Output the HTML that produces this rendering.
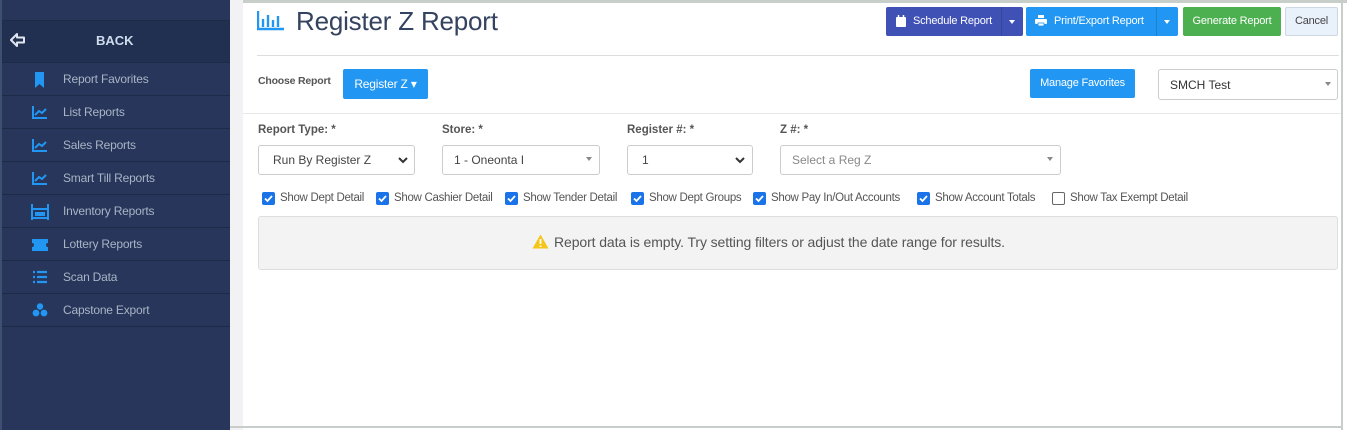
<!DOCTYPE html>
<html><head><style>
*{box-sizing:border-box;margin:0;padding:0}
body{width:1347px;height:430px;position:relative;overflow:hidden;background:#fff;font-family:"Liberation Sans",Arial,sans-serif;}
.a{position:absolute}
#sb{left:0;top:0;width:230px;height:430px;background:#27365a;border-left:2px solid #3d5070}
.row{position:absolute;left:0;width:228px;height:33px;border-bottom:1px solid #1e2b47;color:#a9b4c6;font-size:12px;letter-spacing:-0.2px;line-height:33px;padding-left:61px}
.row svg{position:absolute;left:30px;top:9px}
.btn{position:absolute;color:#fff;font-size:11px;letter-spacing:-0.2px;border-radius:2px;text-align:center;white-space:nowrap}
.lbl{position:absolute;font-size:12px;color:#444;white-space:nowrap}
.sel{position:absolute;height:30px;border:1px solid #ccc;border-radius:3px;font-size:12px;color:#444;line-height:28px;padding-left:14px}
.cb{position:absolute;top:192px;width:13px;height:13px;background:#1a73e8;border-radius:2px}
.cb svg{position:absolute;left:1px;top:1px}
.ct{position:absolute;top:192px;font-size:11.5px;letter-spacing:-0.3px;color:#555;white-space:nowrap}
.caret{position:absolute;width:0;height:0;border-left:3px solid transparent;border-right:3px solid transparent;border-top:4px solid #888}
</style></head><body>
<div id="sb" class="a">
  <div class="a" style="left:0;top:20px;width:228px;height:43px;background:#213050;border-top:1px solid #1e2b47;border-bottom:1px solid #1e2b47"></div>
  <svg class="a" style="left:8px;top:33px" width="16" height="14" viewBox="0 0 16 14"><path d="M7 1 L1 7 L7 13 L7 9.5 L14 9.5 L14 4.5 L7 4.5 Z" fill="none" stroke="#dfe6ee" stroke-width="2" stroke-linejoin="round"/></svg>
  <div class="a" style="left:94px;top:33px;color:#cfdcee;font-weight:bold;font-size:13px">BACK</div>
  <div class="row" style="top:63px"><svg width="14" height="16"><path d="M3 0h9v16l-4.5-4-4.5 4z" fill="#2196f3"/></svg>Report Favorites</div>
  <div class="row" style="top:96px"><svg width="16" height="14"><path d="M1 1v12h14" stroke="#2196f3" stroke-width="2" fill="none"/><path d="M3 10l4-4 3 2 4-4" stroke="#2196f3" stroke-width="2" fill="none"/></svg>List Reports</div>
  <div class="row" style="top:129px"><svg width="16" height="14"><path d="M1 1v12h14" stroke="#2196f3" stroke-width="2" fill="none"/><path d="M3 10l4-4 3 2 4-4" stroke="#2196f3" stroke-width="2" fill="none"/></svg>Sales Reports</div>
  <div class="row" style="top:162px"><svg width="16" height="14"><path d="M1 1v12h14" stroke="#2196f3" stroke-width="2" fill="none"/><path d="M3 10l4-4 3 2 4-4" stroke="#2196f3" stroke-width="2" fill="none"/></svg>Smart Till Reports</div>
  <div class="row" style="top:195px"><svg width="18" height="16" style="left:29px"><path d="M1 0v16M17 0v16M1 14h16M1 5h16" stroke="#2196f3" stroke-width="2" fill="none"/><rect x="4" y="8" width="10" height="4" fill="#2196f3"/></svg>Inventory Reports</div>
  <div class="row" style="top:228px"><svg width="18" height="14" style="left:29px;top:10px"><path d="M1 1h16v4a2 2 0 0 0 0 4v4H1V9a2 2 0 0 0 0-4z" fill="#2196f3"/></svg>Lottery Reports</div>
  <div class="row" style="top:261px"><svg width="16" height="14"><path d="M1 2h2M1 7h2M1 12h2M5 2h10M5 7h10M5 12h10" stroke="#2196f3" stroke-width="2.2"/></svg>Scan Data</div>
  <div class="row" style="top:294px"><svg width="16" height="14"><circle cx="8" cy="3.5" r="3.2" fill="#2196f3"/><circle cx="4" cy="10" r="3.4" fill="#2196f3"/><circle cx="12" cy="10" r="3.4" fill="#2196f3"/></svg>Capstone Export</div>
</div>
<div class="a" style="left:230px;top:0;width:13px;height:430px;background:#f2f2f5"></div>
<div class="a" style="left:243px;top:0;width:1104px;height:3px;background:#c8cfca"></div>
<div class="a" style="left:1341px;top:0;width:2px;height:430px;background:#c8cfca"></div>
<div class="a" style="left:230px;top:426px;width:1113px;height:2px;background:#c8cfca"></div>

<svg class="a" style="left:257px;top:11px" width="28" height="20"><path d="M1 0v18h26" stroke="#2196f3" stroke-width="2.4" fill="none"/><path d="M6 8v8M11 4v12M16 9v7M21 5v11" stroke="#2196f3" stroke-width="2.4"/></svg>
<div class="a" style="left:296px;top:6px;font-size:26px;color:#34435f;letter-spacing:-0.2px">Register Z Report</div>

<div class="btn" style="left:886px;top:7px;width:137px;height:29px;background:#3f51b5;line-height:29px;text-align:left;padding-left:27px">Schedule Report</div>
<svg class="a" style="left:896px;top:15px" width="10" height="12"><rect x="0" y="2" width="10" height="10" rx="1" fill="#fff"/><path d="M2.5 0v3M7.5 0v3" stroke="#fff" stroke-width="1.5"/></svg>
<div class="a" style="left:1001px;top:7px;width:1px;height:29px;background:#3546a0"></div>
<div class="caret" style="left:1009px;top:20px;border-top-color:#fff"></div>
<div class="btn" style="left:1026px;top:7px;width:152px;height:29px;background:#2196f3;line-height:29px;text-align:left;padding-left:28px">Print/Export Report</div>
<svg class="a" style="left:1035px;top:15px" width="12" height="12"><rect x="3" y="0" width="6" height="3" fill="#fff"/><rect x="0" y="4" width="12" height="5" rx="1" fill="#fff"/><rect x="3" y="8" width="6" height="3" fill="#fff" stroke="#2196f3" stroke-width="0.8"/></svg>
<div class="a" style="left:1156px;top:7px;width:1px;height:29px;background:#1a80d0"></div>
<div class="caret" style="left:1164px;top:20px;border-top-color:#fff"></div>
<div class="btn" style="left:1183px;top:7px;width:98px;height:29px;background:#4caf50;line-height:29px">Generate Report</div>
<div class="btn" style="left:1285px;top:7px;width:53px;height:29px;background:#e9f1fb;border:1px solid #cdd8e4;color:#444;line-height:27px">Cancel</div>

<div class="a" style="left:257px;top:55px;width:1082px;height:1px;background:#ddd"></div>
<div class="lbl" style="left:258px;top:75px;font-size:10.5px;font-weight:bold;color:#555;letter-spacing:-0.2px">Choose Report</div>
<div class="btn" style="left:343px;top:69px;width:85px;height:30px;background:#2196f3;line-height:30px;font-size:12px">Register Z ▾</div>
<div class="btn" style="left:1030px;top:69px;width:105px;height:29px;background:#2196f3;line-height:29px">Manage Favorites</div>
<div class="sel" style="left:1158px;top:69px;width:180px;height:31px;line-height:30px;padding-left:11px;color:#333">SMCH Test</div>
<div class="caret" style="left:1325px;top:82px"></div>
<div class="a" style="left:243px;top:113px;width:1098px;height:1px;background:#e8e8e8"></div>

<div class="lbl" style="left:258px;top:124px;font-weight:bold;font-size:11.5px;color:#555">Report Type: *</div>
<div class="lbl" style="left:442px;top:124px;font-weight:bold;font-size:11.5px;color:#555">Store: *</div>
<div class="lbl" style="left:627px;top:124px;font-weight:bold;font-size:11.5px;color:#555">Register #: *</div>
<div class="lbl" style="left:780px;top:124px;font-weight:bold;font-size:11.5px;color:#555">Z #: *</div>
<div class="sel" style="left:258px;top:145px;width:157px">Run By Register Z</div>
<svg class="a" style="left:398px;top:157px" width="10" height="7"><path d="M1 1l4 4 4-4" stroke="#333" stroke-width="2" fill="none"/></svg>
<div class="sel" style="left:442px;top:145px;width:158px;padding-left:11px">1 - Oneonta I</div>
<div class="caret" style="left:586px;top:157px"></div>
<div class="sel" style="left:627px;top:145px;width:126px">1</div>
<svg class="a" style="left:735px;top:157px" width="10" height="7"><path d="M1 1l4 4 4-4" stroke="#333" stroke-width="2" fill="none"/></svg>
<div class="sel" style="left:780px;top:145px;width:281px;padding-left:11px;color:#888">Select a Reg Z</div>
<div class="caret" style="left:1047px;top:157px"></div>

<div class="cb" style="left:262px"><svg width="11" height="11"><path d="M2 5.5l2.5 2.5 4.5-5" stroke="#fff" stroke-width="1.8" fill="none"/></svg></div><div class="ct" style="left:280px">Show Dept Detail</div>
<div class="cb" style="left:376px"><svg width="11" height="11"><path d="M2 5.5l2.5 2.5 4.5-5" stroke="#fff" stroke-width="1.8" fill="none"/></svg></div><div class="ct" style="left:394px">Show Cashier Detail</div>
<div class="cb" style="left:505px"><svg width="11" height="11"><path d="M2 5.5l2.5 2.5 4.5-5" stroke="#fff" stroke-width="1.8" fill="none"/></svg></div><div class="ct" style="left:523px">Show Tender Detail</div>
<div class="cb" style="left:631px"><svg width="11" height="11"><path d="M2 5.5l2.5 2.5 4.5-5" stroke="#fff" stroke-width="1.8" fill="none"/></svg></div><div class="ct" style="left:649px">Show Dept Groups</div>
<div class="cb" style="left:753px"><svg width="11" height="11"><path d="M2 5.5l2.5 2.5 4.5-5" stroke="#fff" stroke-width="1.8" fill="none"/></svg></div><div class="ct" style="left:771px">Show Pay In/Out Accounts</div>
<div class="cb" style="left:917px"><svg width="11" height="11"><path d="M2 5.5l2.5 2.5 4.5-5" stroke="#fff" stroke-width="1.8" fill="none"/></svg></div><div class="ct" style="left:935px">Show Account Totals</div>
<div class="cb" style="left:1052px;background:#fff;border:1px solid #666"></div><div class="ct" style="left:1070px">Show Tax Exempt Detail</div>

<div class="a" style="left:258px;top:216px;width:1080px;height:54px;background:#f3f3f3;border:1px solid #ddd;border-radius:3px"></div>
<svg class="a" style="left:532px;top:234px" width="17" height="15"><path d="M8.5 0.5L16.5 14.5H0.5Z" fill="#f5c518"/><path d="M8.5 5v5M8.5 11.5v1.5" stroke="#fff" stroke-width="1.8"/></svg>
<div class="a" style="left:554px;top:234px;font-size:14px;color:#555;letter-spacing:-0.1px">Report data is empty. Try setting filters or adjust the date range for results.</div>
</body></html>
